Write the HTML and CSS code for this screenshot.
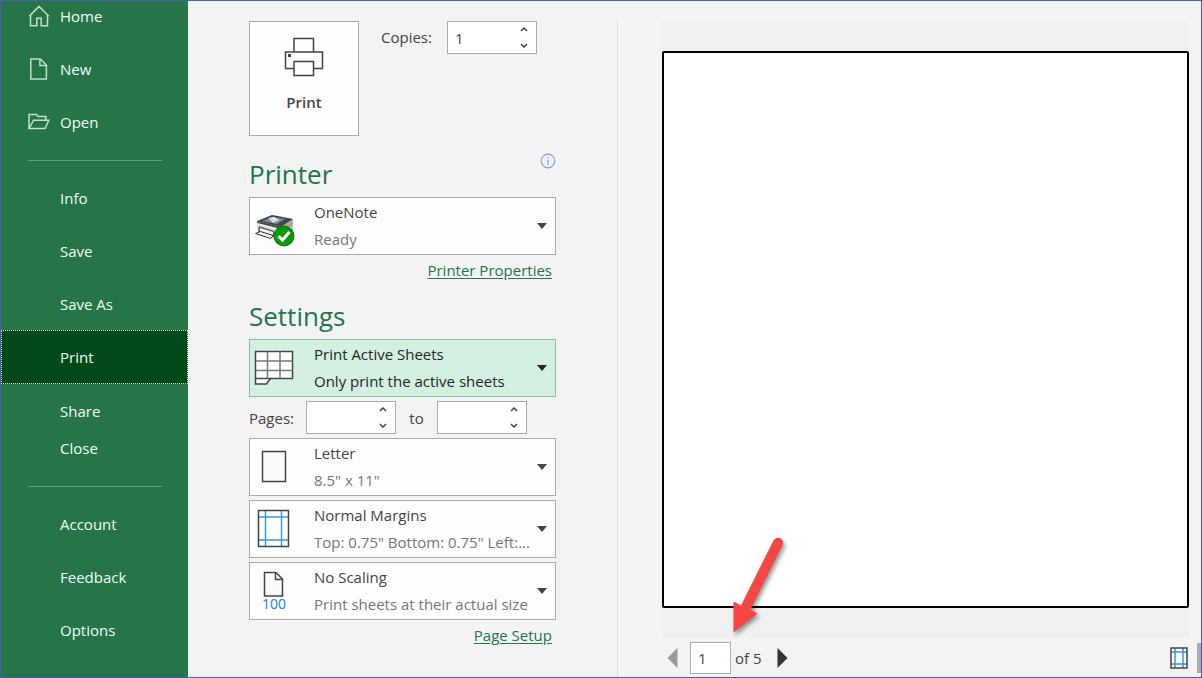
FILE: index.html
```html
<!DOCTYPE html>
<html lang="en">
<head>
<meta charset="utf-8">
<meta name="viewport" content="width=device-width, initial-scale=1">
<title>Print</title>
<link rel="stylesheet" href="styles.css">
</head>
<body>
<div class="backstage">
  <nav class="sidebar" aria-label="File">
    <a class="nav-item" href="#home">
      <svg class="nav-icon" viewBox="0 0 22 22" aria-hidden="true"><path d="M1.2 11.2 11 1.4l9.8 9.8M2.5 10v10.8h6.300v-7.600h4.400v7.600h6.300V10"/></svg>
      Home</a>
    <a class="nav-item" href="#new">
      <svg class="nav-icon" viewBox="0 0 22 22" aria-hidden="true"><path d="M2.800 1h9.600l6 6v14H2.800zM11.900 1v6.500h6.500"/></svg>
      New</a>
    <a class="nav-item" href="#open">
      <svg class="nav-icon" viewBox="0 0 22 22" aria-hidden="true"><path d="M1 17.500V3.500h7.500l1.500 2h7.800v4M1 17.500l4.500-8.200h15.300L17 17.500z"/></svg>
      Open</a>
    <hr class="nav-rule">
    <a class="nav-item" href="#info">Info</a>
    <a class="nav-item" href="#save">Save</a>
    <a class="nav-item" href="#save-as">Save As</a>
    <a class="nav-item nav-item-current" href="#print" aria-current="page">Print</a>
    <a class="nav-item" href="#share">Share</a>
    <a class="nav-item nav-item-short" href="#close">Close</a>
    <hr class="nav-rule">
    <a class="nav-item" href="#account">Account</a>
    <a class="nav-item" href="#feedback">Feedback</a>
    <a class="nav-item" href="#options">Options</a>
  </nav>

  <main class="content">
    <section class="options" aria-label="Print options">
      <div class="print-row">
        <button class="print-button" type="button">
          <svg class="print-icon" viewBox="0 0 40 40" aria-hidden="true"><path d="M10 15V1.500h19.500V15M10 31.500H1.500v-16.500h37v16.500h-9M10 24.500h19.500v14H10z"/><rect class="print-lamp" x="4" y="17" width="3" height="3"/></svg>
          Print
        </button>
        <label class="copies-label" for="copies">Copies:</label>
        <div class="spinner">
          <input class="spinner-input" id="copies" type="text" inputmode="numeric" value="1">
          <button class="step" type="button" aria-label="More copies"><svg class="step-icon" viewBox="0 0 8 5"><path d="M1 4l3-3 3 3"/></svg></button>
          <button class="step" type="button" aria-label="Fewer copies"><svg class="step-icon" viewBox="0 0 8 5"><path d="M1 1l3 3 3-3"/></svg></button>
        </div>
      </div>

      <div class="heading-row heading-row-printer">
        <h2 class="heading">Printer</h2>
        <button class="info-button" type="button" aria-label="Printer status">
          <svg class="info-icon" viewBox="0 0 16 16"><circle cx="8" cy="8" r="6.800"/><path d="M8 7v5M8 4v1.500"/></svg>
        </button>
      </div>
      <div class="picker">
        <select class="picker-select" aria-label="Printer" aria-describedby="printer-note"><option>OneNote</option></select>
        <svg class="picker-icon" viewBox="0 0 44 44" aria-hidden="true">
          <path fill="#c9cccd" d="M5 18l16-7 20 4v12l-19 8-16-6z"/>
          <path fill="#454749" d="M5 17l15-6 21 4-12 8z"/>
          <path fill="#85898c" d="M10 17l11-4 12 2-8 5z"/>
          <path fill="#b8dcf3" d="M16 14l6-1 6 3-7 3z"/>
          <path fill="#fff" d="M19 14l3-1 2 2-3 1z"/>
          <path fill="#45484b" d="M5 17l24 6v2L5 19z"/>
          <path fill="#e2e4e5" d="M5 19l24 6v3L5 22z"/>
          <path fill="#a6a9ab" d="M29 23l12-7v6l-12 7z"/>
          <path fill="#606365" d="M7 22l15 5v6L6 28z"/>
          <path fill="#f5f5f5" d="M8 24l13 4v3L8 28z"/>
          <path fill="#eee" stroke="#333" d="M3.500 29.500l5-2 13 4-3 3z"/>
          <circle cx="32" cy="32" r="10" fill="#0b980b" stroke="#087608"/>
          <path fill="none" stroke="#fff" stroke-width="3" d="M26.500 32l4 4 7-8"/>
        </svg>
        <span class="picker-note" id="printer-note">Ready</span>
        <svg class="picker-arrow" viewBox="0 0 10 6" aria-hidden="true"><path d="M0 0h10L5 6z"/></svg>
      </div>
      <a class="link" href="#printer-properties">Printer Properties</a>

      <div class="heading-row">
        <h2 class="heading">Settings</h2>
      </div>
      <div class="settings">
        <div class="picker picker-active">
          <select class="picker-select" aria-label="What to print" aria-describedby="what-note"><option>Print Active Sheets</option></select>
          <svg class="picker-icon" viewBox="0 0 44 44" aria-hidden="true">
            <path fill="#fff" stroke="#444" stroke-width="1.500" d="M3.500 5.500h37v27h-22l-4 5.500h-11z"/>
            <path fill="none" stroke="#777" stroke-width="1.500" d="M3.500 15h37M3.500 24.500h37M15.500 5.500v27M28 5.500v27"/>
            <path fill="none" stroke="#444" stroke-width="1.500" d="M3.500 32.500h15"/>
          </svg>
          <span class="picker-note" id="what-note">Only print the active sheets</span>
          <svg class="picker-arrow" viewBox="0 0 10 6" aria-hidden="true"><path d="M0 0h10L5 6z"/></svg>
        </div>

        <div class="pages-row">
          <label class="pages-label" for="page-from">Pages:</label>
          <div class="spinner">
            <input class="spinner-input" id="page-from" type="text" inputmode="numeric">
            <button class="step" type="button" aria-label="Later first page"><svg class="step-icon" viewBox="0 0 8 5"><path d="M1 4l3-3 3 3"/></svg></button>
            <button class="step" type="button" aria-label="Earlier first page"><svg class="step-icon" viewBox="0 0 8 5"><path d="M1 1l3 3 3-3"/></svg></button>
          </div>
          <label class="to-label" for="page-to">to</label>
          <div class="spinner">
            <input class="spinner-input" id="page-to" type="text" inputmode="numeric">
            <button class="step" type="button" aria-label="Later last page"><svg class="step-icon" viewBox="0 0 8 5"><path d="M1 4l3-3 3 3"/></svg></button>
            <button class="step" type="button" aria-label="Earlier last page"><svg class="step-icon" viewBox="0 0 8 5"><path d="M1 1l3 3 3-3"/></svg></button>
          </div>
        </div>

        <div class="picker">
          <select class="picker-select" aria-label="Paper size" aria-describedby="size-note"><option>Letter</option></select>
          <svg class="picker-icon" viewBox="0 0 44 44" aria-hidden="true"><path fill="#fafafa" stroke="#444" stroke-width="1.500" d="M10.500 6.500h23v30h-23z"/></svg>
          <span class="picker-note" id="size-note">8.5" x 11"</span>
          <svg class="picker-arrow" viewBox="0 0 10 6" aria-hidden="true"><path d="M0 0h10L5 6z"/></svg>
        </div>

        <div class="picker">
          <select class="picker-select" aria-label="Margins" aria-describedby="margin-note"><option>Normal Margins</option></select>
          <svg class="picker-icon" viewBox="0 0 44 44" aria-hidden="true">
            <path fill="#fff" d="M6.500 3.500h30v36h-30z"/>
            <path fill="none" stroke="#3a96dd" stroke-width="1.500" d="M13.500 3.500v36M29.500 3.500v36M6.500 10h30M6.500 33h30"/>
            <path fill="none" stroke="#444" stroke-width="1.500" d="M6.500 3.500h30v36h-30z"/>
          </svg>
          <span class="picker-note" id="margin-note">Top: 0.75" Bottom: 0.75" Left:...</span>
          <svg class="picker-arrow" viewBox="0 0 10 6" aria-hidden="true"><path d="M0 0h10L5 6z"/></svg>
        </div>

        <div class="picker">
          <select class="picker-select" aria-label="Scaling" aria-describedby="scale-note"><option>No Scaling</option></select>
          <svg class="picker-icon" viewBox="0 0 44 44" aria-hidden="true">
            <path fill="#fafafa" stroke="#444" stroke-width="1.500" d="M12.500 3.500H24l6.500 6.500v17h-18zM23.500 3.500v7h7"/>
            <text class="scale-text" x="22" y="40" text-anchor="middle">100</text>
          </svg>
          <span class="picker-note" id="scale-note">Print sheets at their actual size</span>
          <svg class="picker-arrow" viewBox="0 0 10 6" aria-hidden="true"><path d="M0 0h10L5 6z"/></svg>
        </div>
      </div>
      <a class="link" href="#page-setup">Page Setup</a>
    </section>

    <section class="preview" aria-label="Print preview">
      <div class="canvas"><div class="sheet"></div></div>
      <div class="pager">
        <button class="pager-button pager-button-off" type="button" aria-label="Previous page"><svg class="pager-icon" viewBox="0 0 10 20"><path d="M10 0v20L0 10z"/></svg></button>
        <input class="pager-input" id="page" type="text" inputmode="numeric" value="1" aria-label="Current page">
        <label class="pager-total" for="page">of 5</label>
        <button class="pager-button" type="button" aria-label="Next page"><svg class="pager-icon" viewBox="0 0 10 20"><path d="M0 0v20l10-10z"/></svg></button>
        <button class="margins-button" type="button" aria-label="Show margins">
          <svg class="margins-icon" viewBox="0 0 18 22"><path fill="#fff" d="M1 1h16v20H1z"/><path fill="none" stroke="#3a96dd" stroke-width="1.500" d="M5 1v20M13 1v20M1 5h16M1 17h16"/><path fill="none" stroke="#444" stroke-width="1.500" d="M1 1h16v20H1z"/></svg>
        </button>
        <button class="zoom-button" type="button" aria-label="Zoom to page"></button>
        <svg class="pointer" viewBox="0 0 68 108" aria-hidden="true"><path d="M53.500 6.500a5 5 0 0 1 9 4.500L30.500 75.500l7 4L13.500 98.500 13.500 67.500l7.500 4z"/></svg>
      </div>
    </section>
  </main>
</div>
</body>
</html>
```
FILE: styles.css
```css
* {
  box-sizing: border-box;
}

body {
  margin: 0;
  background: #f3f3f3;
  color: #444;
  font: 15px/20px "Open Sans", "Noto Sans", sans-serif;
}

button,
input,
select {
  margin: 0;
  padding: 0;
  border: 0;
  border-radius: 0;
  background: none;
  color: inherit;
  font: inherit;
}

svg {
  display: block;
}

.backstage {
  display: flex;
  height: 100vh;
  overflow: hidden;
  border: 1px solid #4a5cb8;
}

.sidebar {
  display: flex;
  flex: none;
  flex-direction: column;
  width: 187px;
  margin-top: -12px;
  background: #257549;
}

.nav-item {
  display: flex;
  flex: none;
  align-items: center;
  gap: 10px;
  height: 53px;
  padding-left: 59px;
  color: #f4fbf6;
  text-decoration: none;
}

.nav-item:has(.nav-icon) {
  padding-left: 27px;
}

.nav-item-current {
  height: 54px;
  background: #034a1b;
  outline: 1px dotted #d9e5dc;
  outline-offset: -1px;
}

.nav-item-short {
  height: 22px;
}

.nav-icon {
  width: 22px;
  height: 22px;
  fill: none;
  stroke: #c5dccd;
  stroke-width: 1.5;
}

.nav-rule {
  flex: none;
  width: 134px;
  height: 1px;
  margin: 12px 0 10px 27px;
  border: 0;
  background: #5aa37b;
}

.nav-item-short + .nav-rule {
  margin-top: 27px;
}

.content {
  display: flex;
  flex: 1;
  min-width: 0;
}

.options {
  display: flex;
  flex: none;
  flex-direction: column;
  width: 368px;
  padding: 20px 0 0 61px;
}

.print-row {
  display: flex;
  align-items: flex-start;
}

.print-button {
  display: flex;
  flex-direction: column;
  align-items: center;
  gap: 15px;
  width: 110px;
  height: 115px;
  padding-top: 15px;
  border: 1px solid #ababab;
  background: #fdfdfd;
  font-weight: 600;
}

.print-icon {
  width: 40px;
  height: 40px;
  fill: none;
  stroke: #444;
  stroke-width: 1.5;
}

.print-icon .print-lamp {
  fill: #444;
  stroke: none;
}

.copies-label {
  width: 88px;
  padding: 6px 0 0 22px;
}

.spinner {
  display: grid;
  grid-template: 1fr 1fr / 1fr 24px;
  width: 90px;
  height: 33px;
  border: 1px solid #ababab;
  background: #fff;
}

.spinner-input {
  grid-row: 1 / 3;
  width: 100%;
  min-width: 0;
  padding-left: 7px;
}

.step {
  display: grid;
  place-items: center;
}

.step-icon {
  width: 8px;
  height: 5px;
  fill: none;
  stroke: #444;
  stroke-width: 1.5;
}

.heading-row {
  display: flex;
  justify-content: space-between;
  margin-top: 15px;
  padding-bottom: 5px;
}

.heading-row-printer {
  margin-top: 17px;
}

.heading {
  margin: 3px 0 0;
  color: #257549;
  font-size: 26px;
  font-weight: 400;
  line-height: 36px;
}

.info-button {
  align-self: flex-start;
}

.info-icon {
  width: 16px;
  height: 16px;
  fill: none;
  stroke: #82a5db;
  stroke-width: 1.2;
}

.picker {
  display: grid;
  grid-template: 31px 25px / 64px 1fr 24px;
  align-items: center;
  border: 1px solid #ababab;
  background: #fdfdfd;
}

.picker-active {
  border-color: #86bfa0;
  background: #d3f0e0;
  color: #262626;
}

.picker-select {
  grid-area: 1 / 1 / 3 / 4;
  align-self: stretch;
  width: 100%;
  padding: 0 24px 28px 64px;
  appearance: none;
}

.picker-icon,
.picker-note,
.picker-arrow {
  pointer-events: none;
}

.picker-icon {
  grid-area: 1 / 1 / 3 / 2;
  width: 44px;
  height: 44px;
  margin-left: 2px;
}

.picker-note {
  grid-area: 2 / 2;
  align-self: start;
  color: #777;
  white-space: nowrap;
}

.picker-active .picker-note {
  color: inherit;
}

.picker-arrow {
  grid-area: 1 / 3 / 3 / 4;
  width: 10px;
  height: 6px;
  margin-left: 6px;
  fill: currentColor;
}

.scale-text {
  fill: #2b88d8;
  font-family: "Noto Sans", sans-serif;
  font-size: 14px;
}

.link {
  align-self: flex-end;
  margin: 5px 4px 0 0;
  color: #257549;
  text-underline-offset: 2px;
}

.settings {
  display: grid;
  gap: 4px;
}

.pages-row {
  display: flex;
  align-items: center;
}

.pages-label {
  width: 57px;
}

.to-label {
  width: 41px;
  text-align: center;
}

.preview {
  display: flex;
  flex: 1;
  flex-direction: column;
  min-width: 0;
  margin-top: 20px;
  margin-left: 61px;
  padding-left: 44px;
  border-left: 1px solid #dedede;
}

.canvas {
  display: flex;
  flex: 1;
  margin-right: 12px;
  padding: 30px 0 29px;
  background: #f0f0f0;
}

.sheet {
  flex: 1;
  border: 2px solid #000;
  border-radius: 2px;
  background: #fff;
}

.pager {
  position: relative;
  display: flex;
  align-items: center;
  height: 40px;
  padding: 2px 0 0 5px;
}

.pager-button {
  color: #333;
}

.pager-button-off {
  color: #999;
}

.pager-icon {
  width: 11px;
  height: 20px;
  fill: currentColor;
}

.pager-input {
  width: 41px;
  height: 32px;
  margin-left: 12px;
  padding-left: 7px;
  border: 1px solid #ababab;
  background: #fff;
}

.pager-total {
  width: 46px;
  padding-left: 4px;
}

.margins-button {
  margin-left: auto;
}

.margins-icon {
  width: 18px;
  height: 22px;
}

.zoom-button {
  width: 4px;
  height: 30px;
  margin-left: 9px;
  background: #ababab;
}

.pointer {
  position: absolute;
  bottom: 35px;
  left: 58px;
  width: 68px;
  height: 108px;
  fill: #f64545;
  filter: drop-shadow(2px 3px 2px #0006);
  pointer-events: none;
}
```
